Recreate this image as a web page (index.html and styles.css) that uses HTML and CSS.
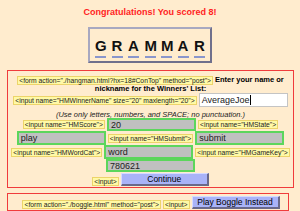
FILE: index.html
```html
<!DOCTYPE html>
<html lang="en">
<head>
  <meta charset="UTF-8">
  <meta name="viewport" content="width=device-width, initial-scale=1.0">
  <title>Hangman - You Win</title>
  <link rel="stylesheet" href="styles.css">
</head>
<body>
  <p class="score">Congratulations! You scored 8!</p>

  <div class="word">
    <span class="letter">G</span>
    <span class="letter">R</span>
    <span class="letter">A</span>
    <span class="letter">M</span>
    <span class="letter">M</span>
    <span class="letter">A</span>
    <span class="letter">R</span>
  </div>

  <div class="form-box winners">
    <div class="row head">
      <span class="tag">&lt;form action="./hangman.html?hx=18#ConTop" method="post"&gt;</span>
      <b class="prompt">Enter your name or</b>
    </div>
    <div class="row sub"><b class="prompt">nickname for the Winners' List:</b></div>
    <div class="row name-row">
      <span class="tag">&lt;input name="HMWinnerName" size="20" maxlength="20"&gt;</span>
      <span class="field name">AverageJoe<span class="caret"></span></span>
    </div>
    <div class="note">(Use only letters, numbers, and SPACE; no punctuation.)</div>
    <div class="row short">
      <span class="tag">&lt;input name="HMScore"&gt;</span>
      <span class="field hidden">20</span>
      <span class="tag">&lt;input name="HMState"&gt;</span>
    </div>
    <div class="row">
      <span class="field hidden">play</span>
      <span class="tag">&lt;input name="HMSubmit"&gt;</span>
      <span class="field hidden">submit</span>
    </div>
    <div class="row">
      <span class="tag">&lt;input name="HMWordCat"&gt;</span>
      <span class="field hidden">word</span>
      <span class="tag">&lt;input name="HMGameKey"&gt;</span>
    </div>
    <div class="row short">
      <span class="field hidden">780621</span>
    </div>
    <div class="row buttons">
      <span class="tag">&lt;input&gt;</span>
      <span class="button">Continue</span>
    </div>
  </div>

  <div class="form-box boggle">
    <div class="row buttons">
      <span class="tag">&lt;form action="./boggle.html" method="post"&gt;</span>
      <span class="tag">&lt;input&gt;</span>
      <span class="button">Play Boggle Instead</span>
    </div>
  </div>
</body>
</html>
```

FILE: styles.css
```css
*, *::before, *::after {
  box-sizing: border-box;
}

body {
  margin: 0;
  background-color: #ffecce;
  font-family: "Liberation Sans", Arial, sans-serif;
  color: #000;
}

.score {
  margin: 7px 0 0;
  font-size: 9px;
  line-height: 11px;
  font-weight: bold;
  color: #f22;
  text-align: center;
}

.word {
  display: flex;
  justify-content: center;
  gap: 5.5px;
  width: 124px;
  height: 36px;
  margin: 9px auto 0;
  padding: 9px 5px 0;
  border: 2px solid;
  border-color: #a8a8c0 #70708c #70708c #a8a8c0;
}

.letter {
  width: 11px;
  height: 20px;
  padding-bottom: 3px;
  border-bottom: 2px solid #8a96cc;
  font-size: 15px;
  line-height: 15px;
  font-weight: bold;
  text-align: center;
  color: #111;
}

.form-box {
  border: 1px solid #f03c3c;
}

.winners {
  margin: 7px 6px 0 7px;
  padding-top: 4px;
}

.boggle {
  height: 18px;
  margin: 5px 11px 0 7px;
  padding: 0 0 1px 6px;
}

.row {
  display: flex;
  justify-content: center;
  align-items: center;
  gap: 2px;
  height: 14px;
}

.head { height: 10px; }
.sub { height: 8px; }
.short { height: 13px; }

.buttons {
  align-items: flex-end;
  height: 15px;
  padding-bottom: 1px;
}

.boggle .buttons {
  height: 16px;
}

.prompt {
  font-size: 7.5px;
  line-height: 8px;
  white-space: nowrap;
}

.note {
  height: 11px;
  padding-top: 2px;
  font-size: 7.5px;
  line-height: 11px;
  font-style: italic;
  text-align: center;
  white-space: nowrap;
  color: #222;
}

.tag {
  padding: 0 1px;
  border: 1px solid #ecd46a;
  background-color: #fff9a6;
  font-size: 6.75px;
  line-height: 7px;
  white-space: nowrap;
  color: #222;
}

.field {
  display: block;
  width: 89px;
  height: 14px;
  padding-left: 2px;
  font-size: 9px;
  line-height: 10px;
  white-space: nowrap;
  color: #222;
}

.hidden {
  background-color: #c0c0c0;
  border: 2px solid #5cd65c;
}

.short .hidden {
  height: 13px;
}

.name {
  background-color: #fff;
  border: 1px solid #c4c4c4;
  line-height: 12px;
}

.caret {
  display: inline-block;
  width: 1px;
  height: 10px;
  background-color: #000;
  vertical-align: -2px;
}

.button {
  width: 88px;
  height: 13px;
  background-color: #a9b3f8;
  border-style: solid;
  border-width: 1px 2px 2px 1px;
  border-color: #d6dbff #69698a #69698a #d6dbff;
  font-size: 8.5px;
  line-height: 10px;
  text-align: center;
}
```
